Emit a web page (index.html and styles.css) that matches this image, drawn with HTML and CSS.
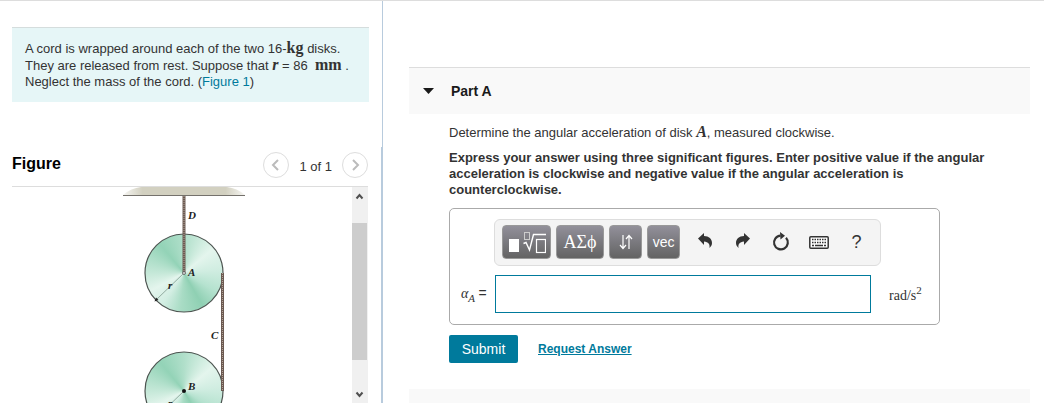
FILE: index.html
```html
<!DOCTYPE html>
<html lang="en">
<head>
    <meta charset="UTF-8">
    <meta name="viewport" content="width=device-width, initial-scale=1.0">
    <title>Part A - Angular acceleration of disk A</title>
    <link rel="stylesheet" href="styles.css">
</head>
<body>
    <div class="page">
        <aside class="side">
            <div class="problem">
                A cord is wrapped around each of the two 16-<span class="unit">kg</span> disks. They are released from rest. Suppose that <span class="var">r</span> = 86 &nbsp;<span class="unit">mm</span> . Neglect the mass of the cord. (<a class="figure-link" href="#figure">Figure 1</a>)
            </div>

            <section class="figure" id="figure">
                <header class="figure-header">
                    <h2 class="figure-title">Figure</h2>
                    <div class="pager">
                        <button class="pager-button" type="button" aria-label="Previous figure">
                            <svg width="10" height="12" viewBox="0 0 10 12"><path d="M7 1L2 6l5 5" fill="none" stroke="#bbb" stroke-width="2"/></svg>
                        </button>
                        <span class="pager-text">1 of 1</span>
                        <button class="pager-button" type="button" aria-label="Next figure">
                            <svg width="10" height="12" viewBox="0 0 10 12"><path d="M3 1l5 5-5 5" fill="none" stroke="#bbb" stroke-width="2"/></svg>
                        </button>
                    </div>
                </header>
                <div class="figure-body">
                    <div class="drawing">
                        <svg width="122" height="264" viewBox="0 0 122 264">
                            <defs>
                                <linearGradient id="ceiling" x1="0" x2="1" y1="0" y2="0">
                                    <stop offset="0" stop-color="#d2d0c0" stop-opacity="0.2"/>
                                    <stop offset="0.16" stop-color="#d2d0c0"/>
                                    <stop offset="0.84" stop-color="#d2d0c0"/>
                                    <stop offset="1" stop-color="#d2d0c0" stop-opacity="0.2"/>
                                </linearGradient>
                            </defs>

                            <!-- ceiling -->
                            <path d="M0 8Q8 1 18 0H104Q114 1 122 8z" fill="url(#ceiling)"/>
                            <path d="M0 8.500H122" stroke="#74716c" stroke-width="1"/>

                            <!-- disk A -->
                            <foreignObject x="22" y="47" width="78" height="78"><div class="disk"></div></foreignObject>
                            <circle cx="61" cy="86" r="39" fill="none" stroke="#4c5450" stroke-width="1.200"/>
                            <path d="M61 86L34 112" stroke="#7f9a8e" stroke-width="0.800"/>
                            <path d="M31.500 114.500l1.500-4 2.500 2.500z" fill="#222"/>

                            <!-- disk B -->
                            <foreignObject x="22" y="165" width="78" height="78"><div class="disk"></div></foreignObject>
                            <circle cx="61" cy="204" r="39" fill="none" stroke="#4c5450" stroke-width="1.200"/>
                            <path d="M61 204L34 230" stroke="#7f9a8e" stroke-width="0.800"/>
                            <circle cx="61" cy="204" r="2" fill="#111"/>

                            <!-- cords -->
                            <path d="M61 9V85" stroke="#6b5a52" stroke-width="3"/>
                            <path d="M61 9V85" stroke="#b5a498" stroke-width="1" stroke-dasharray="1 1"/>
                            <path d="M99.500 86V204" stroke="#6b5a52" stroke-width="3"/>
                            <path d="M99.500 86V204" stroke="#b5a498" stroke-width="1" stroke-dasharray="1 1"/>
                            <circle cx="61" cy="86" r="1.500" fill="#ddd" stroke="#555" stroke-width="0.800"/>

                            <g class="labels">
                                <text x="65" y="32">D</text>
                                <text x="65" y="89">A</text>
                                <text x="45" y="102">r</text>
                                <text x="88" y="152">C</text>
                                <text x="65" y="203">B</text>
                                <text x="45" y="220">r</text>
                            </g>
                        </svg>
                    </div>
                    <div class="scrollbar">
                        <svg width="16" height="36" viewBox="0 0 16 36"><path d="M4.500 11.500L7.500 8l3 3.500" fill="none" stroke="#505050" stroke-width="2"/></svg>
                        <div class="scroll-thumb"></div>
                        <svg width="16" height="17" viewBox="0 0 16 17"><path d="M4.500 6.500l3 3.500 3-3.500" fill="none" stroke="#505050" stroke-width="2"/></svg>
                    </div>
                </div>
            </section>
        </aside>

        <main class="main">
            <header class="part-header">
                <svg width="11" height="6" viewBox="0 0 11 6"><path d="M0 0h11L5.500 6z" fill="#1a1a1a"/></svg>
                <h2 class="part-title">Part A</h2>
            </header>

            <form class="part-body">
                <p class="question">Determine the angular acceleration of disk <span class="var">A</span>, measured clockwise.</p>
                <p class="instructions">Express your answer using three significant figures. Enter positive value if the angular acceleration is clockwise and negative value if the angular acceleration is counterclockwise.</p>

                <div class="answer-box">
                    <div class="toolbar">
                        <button class="tool wide" type="button" aria-label="Templates">
                            <svg width="40" height="24" viewBox="0 0 40 24">
                                <rect x="3" y="9" width="10" height="13" fill="#fff"/>
                                <g fill="none" stroke="#fff">
                                    <rect x="18.500" y="2.500" width="5" height="7" stroke="#ccc"/>
                                    <path d="M17.500 13.500l2.500-1L23.500 20 27.500 4.500H40" stroke-width="1.400"/>
                                    <rect x="30.500" y="9.500" width="9" height="13" stroke-width="1.200"/>
                                </g>
                            </svg>
                        </button>
                        <button class="tool wide greek" type="button">ΑΣϕ</button>
                        <button class="tool" type="button" aria-label="Subscript and superscript">
                            <svg width="14" height="16" viewBox="0 0 14 16"><g fill="none" stroke="#fff" stroke-width="1.200"><path d="M4 1v13M1 11l3 3.500L7 11"/><path d="M10 15V2M7 5l3-3.500L13 5"/></g></svg>
                        </button>
                        <button class="tool" type="button">vec</button>
                        <div class="icon-buttons">
                            <button class="icon-button" type="button" aria-label="Undo">
                                <svg width="14" height="18" viewBox="0 0 14 18"><path d="M0 5.500L6 0v3c5 0 8 3 8 7 0 2-1 3.500-2.500 5 .5-4-1-6-5.500-6.500V12z" fill="#333"/></svg>
                            </button>
                            <button class="icon-button" type="button" aria-label="Redo">
                                <svg width="14" height="18" viewBox="0 0 14 18"><path d="M14 5.500L8 0v3c-5 0-8 3-8 7 0 2 1 3.500 2.500 5-.5-4 1-6 5.500-6.500V12z" fill="#333"/></svg>
                            </button>
                            <button class="icon-button" type="button" aria-label="Reset">
                                <svg width="18" height="20" viewBox="0 0 18 20"><path d="M14 5.800A6.900 6.900 0 1 1 8.500 3.600" fill="none" stroke="#333" stroke-width="2.200"/><path d="M8 0l5 3.800-4.500 3.700z" fill="#333"/></svg>
                            </button>
                            <button class="icon-button" type="button" aria-label="Keyboard shortcuts">
                                <svg width="20" height="13" viewBox="0 0 20 13"><rect x="0.800" y="0.800" width="18.400" height="11.400" rx="1" fill="#fff" stroke="#333" stroke-width="1.500"/><path d="M3 3.500h14M3 6.500h14" stroke="#333" stroke-width="1.500" stroke-dasharray="1.500 1"/><path d="M3 9.500h2M6 9.500h8M15 9.500h2" stroke="#333" stroke-width="1.500"/></svg>
                            </button>
                            <button class="icon-button help" type="button">?</button>
                        </div>
                    </div>
                    <div class="answer-row">
                        <label class="answer-label" for="answer"><i>α</i><sub>A</sub> <span class="equals">=</span></label>
                        <input class="answer-input" id="answer" type="text">
                        <span class="answer-unit">rad/s<sup>2</sup></span>
                    </div>
                </div>

                <div class="actions">
                    <button class="submit" type="button">Submit</button>
                    <a class="request" href="#">Request Answer</a>
                </div>
            </form>

            <div class="next-part"></div>
        </main>
    </div>
</body>
</html>
```
FILE: styles.css
```css
* {
    box-sizing: border-box;
}
body {
    margin: 0;
    font-family: "Liberation Sans", Arial, sans-serif;
    font-size: 13px;
    line-height: 16px;
    color: #333;
    background-color: #fff;
}
h2, p {
    margin: 0;
}
button {
    font-family: inherit;
    cursor: pointer;
    padding: 0;
}
svg {
    display: block;
}
.page {
    display: flex;
    height: 100vh;
    overflow: hidden;
    border-top: 1px solid #ddd;
}

/* Left column */
.side {
    display: flex;
    flex-direction: column;
    flex: 0 0 383px;
    border-right: 1px solid #b8cbdd;
}
.problem {
    margin: 26px 13px 0 12px;
    padding: 12px 13px;
    border-top: 1px solid #d5dddd;
    background-color: #e6f6f7;
}
.unit, .var {
    font-family: "Liberation Serif", serif;
    font-size: 16px;
    font-weight: bold;
    line-height: 16px;
}
.var {
    font-style: italic;
}
.figure-link {
    color: #007a9c;
    text-decoration: none;
}
.figure {
    display: flex;
    flex-direction: column;
    flex: 1;
    min-height: 0;
    margin-top: 45px;
    padding: 5px 13px 0 12px;
    border-right: 1px solid #b8cbdd;
}
.figure-header {
    display: flex;
    justify-content: space-between;
    align-items: flex-start;
    height: 35px;
    border-bottom: 1px solid #ddd;
}
.figure-title {
    font-size: 16px;
    line-height: 24px;
    color: #000;
}
.pager {
    display: flex;
    align-items: center;
    gap: 10px;
}
.pager-text {
    padding-top: 4px;
}
.pager-button {
    display: flex;
    align-items: center;
    justify-content: center;
    width: 26px;
    height: 26px;
    border: 1px solid #ddd;
    border-radius: 50%;
    background-color: #fff;
}
.figure-body {
    display: flex;
    flex: 1;
    min-height: 0;
}
.drawing {
    flex: 1;
    padding-left: 111px;
    overflow: hidden;
}
.disk {
    width: 78px;
    height: 78px;
    border-radius: 50%;
    background: conic-gradient(#b0dfca 0deg, #e4f5ed 50deg, #d0ede1 85deg, #b5e2cf 120deg, #8fd0b3 150deg, #a9dcc5 185deg, #d3eee3 215deg, #e4f5ed 242deg, #c5e8d8 270deg, #93d3b7 320deg, #b0dfca 360deg);
}
.labels {
    font-family: "Liberation Serif", serif;
    font-size: 11px;
    font-style: italic;
    font-weight: bold;
    fill: #222;
}
.scrollbar {
    display: flex;
    flex-direction: column;
    width: 16px;
    background-color: #f0f0f0;
}
.scroll-thumb {
    flex: 0 1 137px;
    width: 15px;
    margin-bottom: auto;
    background-color: #cdcdcd;
}

/* Right column */
.main {
    display: flex;
    flex-direction: column;
    flex: 1;
    padding: 66px 14px 0 26px;
}
.part-header {
    display: flex;
    align-items: center;
    gap: 17px;
    padding: 15px 14px;
    border-top: 1px solid #ddd;
    background-color: #f9f9f9;
}
.part-title {
    font-size: 14px;
    line-height: 16px;
    color: #1a1a1a;
}
.part-body {
    padding: 10px 32px 0 40px;
}
.instructions {
    margin-top: 9px;
    font-weight: bold;
}
.answer-box {
    max-width: 491px;
    margin-top: 10px;
    padding: 10px 11px 11px;
    border: 1px solid #aaa;
    border-radius: 5px;
}
.toolbar {
    display: flex;
    align-items: center;
    gap: 5px;
    width: 387px;
    margin-left: 33px;
    padding: 5px 7px 6px;
    border: 1px solid #ddd;
    border-radius: 6px;
    background-color: #f4f4f4;
}
.tool {
    display: flex;
    align-items: center;
    justify-content: center;
    width: 33px;
    height: 34px;
    border: 1px solid #999;
    border-radius: 4px;
    background: linear-gradient(#92909a, #636363);
    color: #fff;
    font-size: 14px;
}
.tool.wide {
    width: 49px;
}
.tool.greek {
    font-family: "Liberation Serif", serif;
    font-size: 18px;
}
.icon-buttons {
    display: flex;
    gap: 5px;
    margin-left: 3px;
}
.icon-button {
    display: flex;
    align-items: center;
    justify-content: center;
    width: 33px;
    height: 34px;
    border: 0;
    background: none;
}
.help {
    color: #333;
    font-size: 18px;
    line-height: 16px;
}
.answer-row {
    display: flex;
    align-items: center;
    margin-top: 9px;
}
.answer-label {
    width: 34px;
    font-family: "Liberation Serif", serif;
    font-size: 14px;
}
.answer-label sub {
    font-size: 11px;
    font-style: italic;
    line-height: 1;
}
.equals {
    font-family: "Liberation Sans", Arial, sans-serif;
}
.answer-input {
    flex: 0 1 376px;
    min-width: 0;
    height: 38px;
    border: 1px solid #007a9c;
    background-color: #fff;
    font-size: 14px;
}
.answer-unit {
    margin-left: 18px;
    font-family: "Liberation Serif", serif;
    font-size: 14px;
    white-space: nowrap;
}
.answer-unit sup {
    font-size: 11px;
    line-height: 1;
}
.actions {
    display: flex;
    align-items: center;
    gap: 20px;
    margin-top: 10px;
}
.submit {
    width: 69px;
    height: 28px;
    border: 0;
    border-radius: 2px;
    background-color: #007a9c;
    color: #fff;
    font-size: 14px;
}
.request {
    color: #007a9c;
    font-size: 12px;
    font-weight: bold;
}
.next-part {
    flex: 1;
    margin-top: 26px;
    background-color: #f9f9f9;
}
```
